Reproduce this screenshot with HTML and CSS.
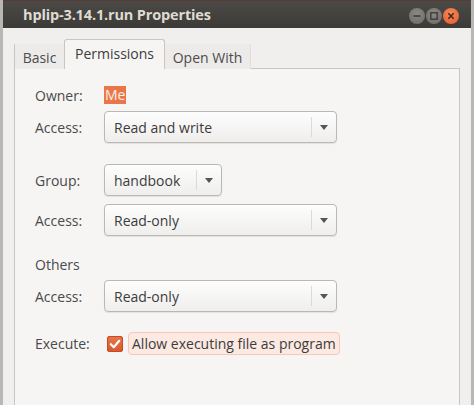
FILE: index.html
```html
<!DOCTYPE html>
<html>
<head>
<meta charset="utf-8">
<link rel="stylesheet" href="styles.css">
</head>
<body>
<div class="window">
  <div class="titlebar">
    <span class="title">hplip-3.14.1.run Properties</span>
    <div class="wbuttons">
      <span class="wbtn min"><svg width="16" height="16" viewBox="0 0 16 16"><rect x="4.5" y="7.2" width="7" height="1.6" fill="#3f3e3a"/></svg></span>
      <span class="wbtn max"><svg width="16" height="16" viewBox="0 0 16 16"><rect x="4.8" y="4.8" width="6.4" height="6.4" fill="none" stroke="#3f3e3a" stroke-width="1.4"/></svg></span>
      <span class="wbtn close"><svg width="16" height="16" viewBox="0 0 16 16"><path d="M5.3 5.3 L10.7 10.7 M10.7 5.3 L5.3 10.7" stroke="#3a2a22" stroke-width="1.6"/></svg></span>
    </div>
  </div>
  <div class="body">
    <div class="tabs">
      <div class="tab">Basic</div>
      <div class="tab active">Permissions</div>
      <div class="tab">Open With</div>
    </div>
    <div class="frame">
      <div class="row owner">
        <span class="label">Owner:</span>
        <span class="me">Me</span>
      </div>
      <div class="row r-access1">
        <span class="label">Access:</span>
        <div class="combo wide"><span class="ctext">Read and write</span><span class="sep"></span><span class="arrow"></span></div>
      </div>
      <div class="row r-group">
        <span class="label">Group:</span>
        <div class="combo narrow"><span class="ctext">handbook</span><span class="sep"></span><span class="arrow"></span></div>
      </div>
      <div class="row r-access2">
        <span class="label">Access:</span>
        <div class="combo wide"><span class="ctext">Read-only</span><span class="sep"></span><span class="arrow"></span></div>
      </div>
      <div class="row r-others">
        <span class="label">Others</span>
      </div>
      <div class="row r-access3">
        <span class="label">Access:</span>
        <div class="combo wide"><span class="ctext">Read-only</span><span class="sep"></span><span class="arrow"></span></div>
      </div>
      <div class="row r-exec">
        <span class="label">Execute:</span>
        <span class="check"><svg width="16" height="16" viewBox="0 0 16 16"><path d="M3.8 8.2 L6.8 11.2 L12.2 4.8" fill="none" stroke="#ffffff" stroke-width="2.2" stroke-linecap="round" stroke-linejoin="round"/></svg></span>
        <span class="checklabel">Allow executing file as program</span>
      </div>
    </div>
  </div>
</div>
</body>
</html>
```

FILE: styles.css
```css
html, body {
  margin: 0;
  padding: 0;
}
body {
  background: #b9b7b3;
  width: 474px;
  height: 405px;
  overflow: hidden;
  font-family: "Open Sans", "DejaVu Sans", sans-serif;
}
.window {
  margin: 0 3px;
  height: 405px;
  background: #f0efed;
  display: flex;
  flex-direction: column;
}
.titlebar {
  height: 28px;
  flex: none;
  background: linear-gradient(#4a4945, #3c3b37);
  border-top: 1px solid #5a3a36;
  box-sizing: border-box;
  display: flex;
  align-items: center;
  padding-left: 20px;
  padding-right: 12px;
}
.title {
  color: #dfdbd2;
  font-weight: bold;
  font-size: 14.5px;
  letter-spacing: -0.15px;
  flex: 1;
}
.wbuttons {
  display: flex;
  gap: 1px;
  margin-top: 2px;
}
.wbtn {
  width: 16px;
  height: 16px;
  border-radius: 50%;
  display: flex;
}
.wbtn.min, .wbtn.max {
  background: radial-gradient(circle at 50% 35%, #8a8986, #6a6966);
}
.wbtn.close {
  background: radial-gradient(circle at 50% 35%, #f78a5a, #e8582b);
}
.body {
  flex: 1;
  padding: 11px 11px 0 11px;
  display: flex;
  flex-direction: column;
}
.tabs {
  display: flex;
  align-items: flex-end;
  height: 30px;
  position: relative;
  z-index: 1;
  margin-bottom: -1px;
}
.tab {
  font-size: 14px;
  color: #4c4c4c;
  height: 25px;
  box-sizing: border-box;
  padding: 1px 0 0 0;
  display: flex;
  align-items: center;
  justify-content: center;
  white-space: nowrap;
  flex: none;
  background: #ecebe9;
  border-left: 1px solid #d8d6d2;
}
.tab:first-child {
  border-left: 1px solid #c8c6c2;
  width: 50px;
}
.tab:last-child {
  border-right: 1px solid #e0deda;
  width: 86px;
}
.tab.active {
  height: 30px;
  width: 101px;
  padding: 0 0 2px 0;
  color: #3c3c3c;
  background: #f6f5f4;
  border: 1px solid #c8c6c2;
  border-bottom: none;
  border-radius: 3px 3px 0 0;
}
.tab.active + .tab {
  border-left: none;
}
.frame {
  flex: 1;
  background: #f6f5f4;
  border: 1px solid #c8c6c2;
  border-bottom: none;
  padding: 17px 20px 0 20px;
  display: flex;
  flex-direction: column;
}
.row {
  display: flex;
  align-items: center;
  font-size: 14px;
  color: #4a4a4a;
}
.label {
  width: 69px;
  flex: none;
}
.owner { height: 18px; }
.me {
  background: #e9774a;
  color: #fdeee6;
  padding: 0 1px;
  line-height: 18px;
}
.r-access1 { margin-top: 7px; }
.r-group { margin-top: 21px; }
.r-access2 { margin-top: 8px; }
.r-others { margin-top: 19px; height: 18px; }
.r-access3 { margin-top: 7px; }
.r-exec { margin-top: 20px; height: 23px; }
.combo {
  height: 32px;
  box-sizing: border-box;
  border: 1px solid #bab8b3;
  border-radius: 4px;
  background: linear-gradient(#fdfdfd, #efeeec);
  box-shadow: 0 1px 1px rgba(0,0,0,0.08);
  display: flex;
  align-items: center;
  color: #3c3c3c;
}
.combo.wide { width: 233px; }
.combo.narrow { width: 118px; }
.ctext {
  flex: 1;
  padding-left: 9px;
}
.sep {
  width: 1px;
  align-self: stretch;
  margin: 5px 0;
  background: #dcdad6;
}
.arrow {
  width: 24px;
  height: 32px;
  display: flex;
  align-items: center;
  justify-content: center;
}
.arrow::before {
  content: "";
  width: 0;
  height: 0;
  border-left: 4px solid transparent;
  border-right: 4px solid transparent;
  border-top: 5px solid #555;
  margin-top: 1px;
}
.check {
  width: 16px;
  height: 16px;
  margin-left: 3px;
  border-radius: 3px;
  background: linear-gradient(#e9784a, #d9562b);
  box-shadow: inset 0 0 0 1px #c24c25;
  display: flex;
}
.checklabel {
  margin-left: 5px;
  height: 23px;
  box-sizing: border-box;
  line-height: 21px;
  padding: 0 3px 0 3px;
  background: #fbe9e2;
  border: 1px solid #f3c9b9;
  border-radius: 4px;
  color: #3c3c3c;
}
```
